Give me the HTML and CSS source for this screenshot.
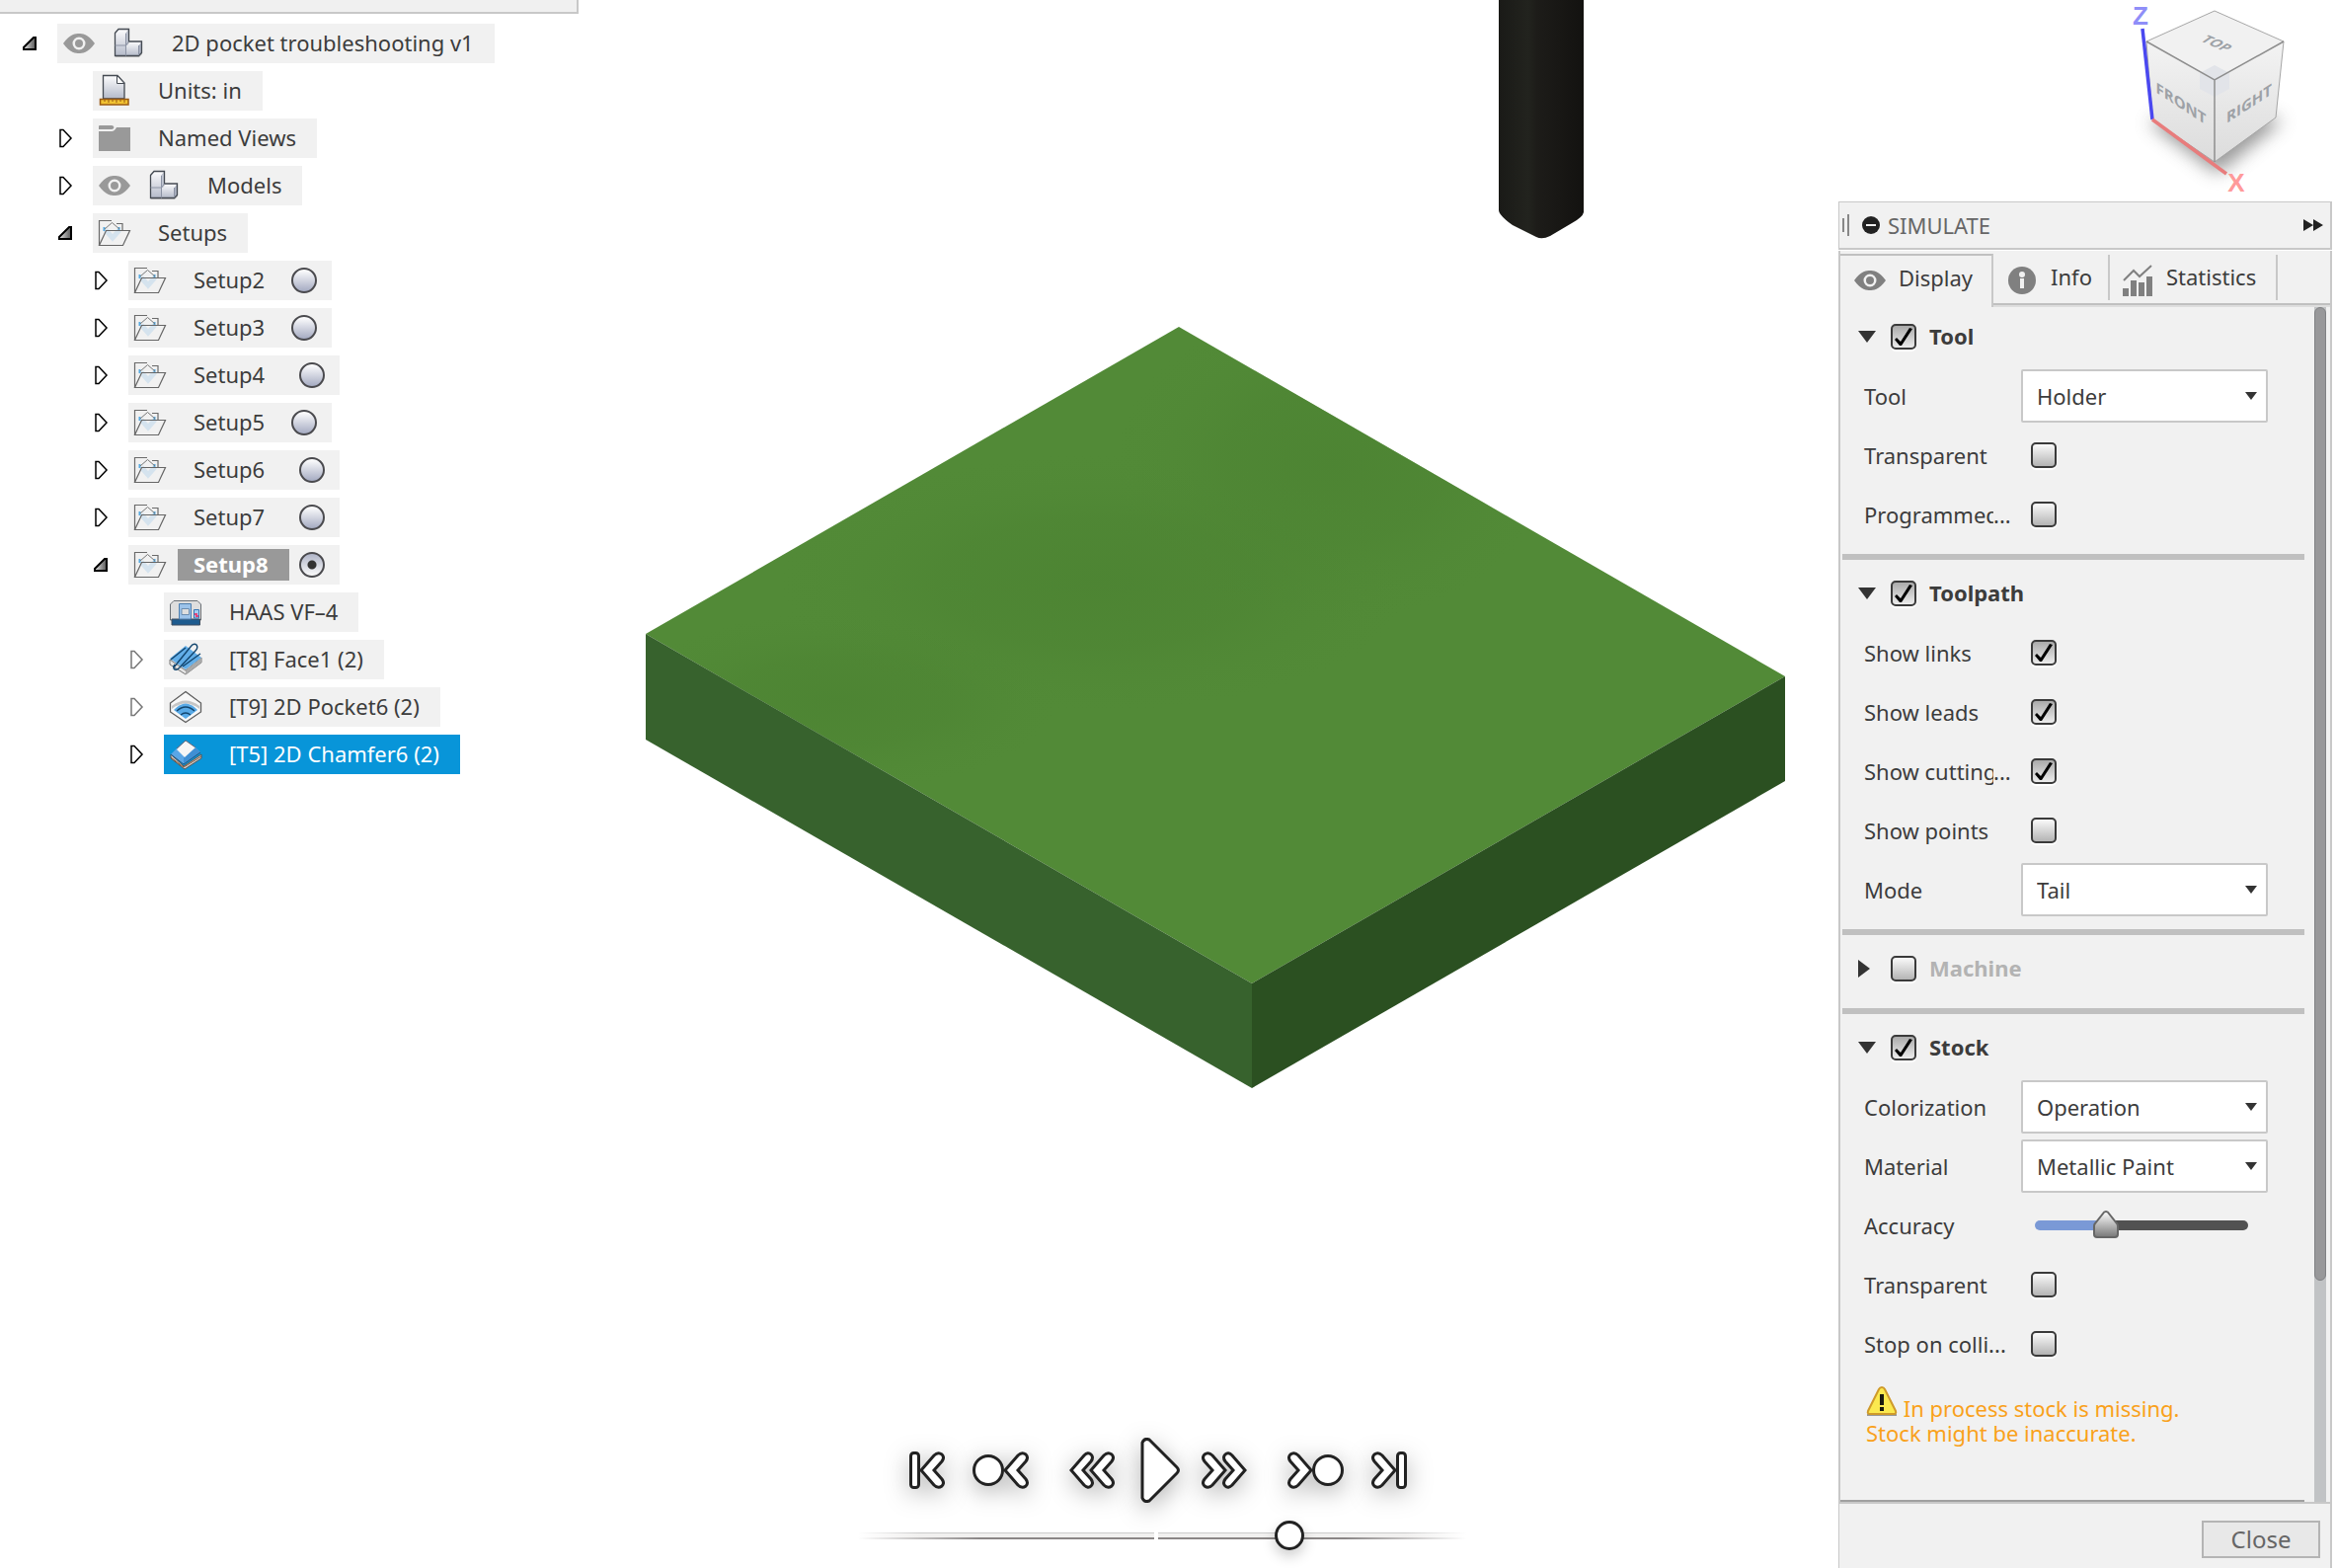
FILE: index.html
```html
<!DOCTYPE html>
<html lang="en">
<head>
<meta charset="utf-8">
<title>Simulate</title>
<link rel="stylesheet" href="styles.css">
</head>
<body>
<svg class="defs" aria-hidden="true">
  <defs>
    <linearGradient id="steel" x1="0" y1="0" x2="0" y2="1"><stop offset="0" stop-color="#fdfdfe"/><stop offset="1" stop-color="#b4bac9"/></linearGradient>
    <linearGradient id="open-fill" x1="0" y1="0" x2="1" y2="0"><stop offset="0" stop-color="#e8e8e8"/><stop offset="1" stop-color="#555"/></linearGradient>
  </defs>
  <symbol id="t-open" viewBox="0 0 36 40"><path d="M2 26V24L12 14H14V26Z" fill="url(#open-fill)" stroke="#000" stroke-width="2"/></symbol>
  <symbol id="t-closed" viewBox="0 0 36 40"><path d="M3 11.500H6L14 20L6 28.500H3Z" fill="#fff" stroke="currentColor" stroke-width="1.500"/></symbol>
  <symbol id="eye" viewBox="0 0 32 20"><path fill="currentColor" fill-rule="evenodd" d="M0 10C7 0 13 0 16 0S25 0 32 10C25 20 19 20 16 20S7 20 0 10ZM16 3.500A6.500 6.500 0 1 0 16 16.500A6.500 6.500 0 1 0 16 3.500ZM16 6A4 4 0 1 1 16 14A4 4 0 1 1 16 6Z"/></symbol>
  <symbol id="i-model" viewBox="0 0 50 40">
    <path d="M9 9L12 6H23V19L33 18L36 20V31L33 34H9Z" fill="#888" opacity=".4"/>
    <path d="M8 10L12 5.500H22.500L19 10V32.500H8Z" fill="url(#steel)"/><path d="M19 10L22.500 5.500V18L19 32.500Z" fill="#c3c8d4"/>
    <path d="M21 22L24 18H35.500L33 22V32.500H19V22Z" fill="url(#steel)"/><path d="M33 22L35.500 18V29L33 32.500Z" fill="#aab0c0"/>
    <path d="M8.500 9.500L12 5.500H22.500V18H35.500V29.500L32.500 32.500H8.500Z" fill="none" stroke="#444a52" stroke-width="1.300"/>
    <path d="M8.500 22H19.500V32.500M19.500 10V22L22.500 18M32.500 22V32" fill="none" stroke="#8c93a4"/>
  </symbol>
  <symbol id="i-units" viewBox="0 0 50 40">
    <path d="M10.500 4.500H25L32 12V28H10.500Z" fill="url(#steel)" stroke="#444a52" stroke-width="1.300"/><path d="M24.500 4.500V12.500H32Z" fill="#fff" stroke="#444a52"/>
    <path d="M7.500 28.500H36V34H7.500Z" fill="#f1c232" stroke="#9a5a12" stroke-width="1.500"/><path d="M12 29V31M16 29V32M20 29V31M24 29V32M28 29V31M32 29V32" stroke="#9a5a12"/>
  </symbol>
  <symbol id="i-folder" viewBox="0 0 50 40"><path d="M6 8Q6 7 7 7H19Q21 7 21.500 9Q21 11 19 11H6Z" fill="#999"/><path d="M6 13H19Q22 13 24 9H38V33H6Z" fill="#999"/></symbol>
  <symbol id="i-setup" viewBox="0 0 50 40">
    <path d="M6.500 32.500V7.500H19M24 10.500H30V17" fill="none" stroke="#6a6a6a" stroke-width="1.200"/>
    <path d="M13 17L20 25L27 17" fill="none" stroke="#d5e3ee" stroke-width="5"/><path d="M11.500 14V18M26.500 14V17" stroke="#58a9df" stroke-width="2"/>
    <path d="M12 16L19.500 9.500L27 16" fill="none" stroke="#777"/><path d="M13.500 17.500H37.500L30.500 32.500H6.500Z" fill="none" stroke="#666" stroke-width="1.200"/>
  </symbol>
  <symbol id="i-machine" viewBox="0 0 50 40">
    <path d="M6.500 28V12L10 8.500H34L37.500 12V28Z" fill="#dedede" stroke="#6b7076"/><path d="M8 27H36.500V33H8Z" fill="#1d5b8f" stroke="#3e4f60"/>
    <path d="M15.500 11.500H27.500V27H15.500Z" fill="#9cc3ea" stroke="#4f7fae"/><path d="M18 16.500H25.500V22.500H18Z" fill="#dedede" stroke="#6b8db0"/>
    <path d="M30.500 17.500H35.500V26H30.500Z" fill="#a4cdf2" stroke="#3877b4"/><path d="M31 21H34V23H35V25H32V23H31Z" fill="#e0457b"/>
  </symbol>
  <symbol id="i-face" viewBox="0 0 50 40">
    <path d="M6 20L22 31L38 18V23L22 35L6 25Z" fill="#e4e4e4" stroke="#777"/><path d="M22 31L38 18V23L22 35Z" fill="#a9a9a9"/>
    <path d="M6 19L22 6L38 18L22 30Z" fill="#62aee8"/>
    <path d="M10 28L27 7Q30 3 33 5Q35 8 32 11L16 28Q12 32 10 29Q9 27 11 25M7 20L22 8M19 27L37 14" fill="none" stroke="#12456e" stroke-width="1.400"/>
  </symbol>
  <symbol id="i-pocket" viewBox="0 0 50 40">
    <path d="M22 4.500L37.500 16V25L22 35.500L6.500 25V16Z" fill="#f8f8f8" stroke="#5d5d5d" stroke-width="1.300"/>
    <path d="M8 19Q22 8 36 19V22Q22 11 8 22Z" fill="#c6c6c6"/><path d="M10 23Q22 10 34 23L22 32Z" fill="#58a9e6"/>
    <path d="M13 24Q22 16 31 24M17 28Q22 24 27 28" fill="none" stroke="#12456e" stroke-width="1.300"/>
  </symbol>
  <symbol id="i-chamfer" viewBox="0 0 50 40">
    <path d="M7 20L20 32L38 20V24L21 35L7 24Z" fill="#cfcfcf" stroke="#555"/><path d="M7 23L20 33L38 22" fill="none" stroke="#8a5a3a"/>
    <path d="M7 20L14 13L22 6L32 13L37 18L20 30Z" fill="#5aa6e6"/><path d="M20 23L32 13L37 18L20 30Z" fill="#3f8fd4"/><path d="M13 15L22 6L32 13L21 23Z" fill="#f6f6f6"/>
    <path d="M13 14L22 6L32 13" fill="none" stroke="#667"/><path d="M7 20L20 30L37 18" fill="none" stroke="#24557f"/>
  </symbol>
  <symbol id="tri-down" viewBox="0 0 18 18"><path d="M0 3H18L9 15Z" fill="#333"/></symbol>
  <symbol id="tri-right" viewBox="0 0 18 18"><path d="M0 0V18L12 9Z" fill="#333"/></symbol>
</svg>

<main class="app">
  <svg class="scene" viewBox="0 0 2366 1588" preserveAspectRatio="xMidYMin slice" role="img" aria-label="Stock model">
    <defs>
      <linearGradient id="holder" x1="0" y1="0" x2="1" y2="0"><stop offset="0" stop-color="#1a1a17"/><stop offset=".35" stop-color="#22231e"/><stop offset=".45" stop-color="#1d1c19"/><stop offset="1" stop-color="#131210"/></linearGradient>
      <radialGradient id="shade"><stop offset="0" stop-color="#4c8332" stop-opacity=".8"/><stop offset=".5" stop-color="#4c8332" stop-opacity=".5"/><stop offset="1" stop-color="#508835" stop-opacity="0"/></radialGradient>
      <clipPath id="top-face"><path d="M1194 331L1808 685L1268 996L654 642Z"/></clipPath>
    </defs>
    <path d="M1518 0H1604V215Q1603 220 1592 226L1570 239Q1562 243 1556 240L1532 228Q1518 218 1518 213Z" fill="url(#holder)"/>
    <path d="M1194 331L1808 685L1268 996L654 642Z" fill="#528a37"/>
    <g clip-path="url(#top-face)"><ellipse cx="1350" cy="470" rx="220" ry="160" fill="url(#shade)"/><ellipse cx="1110" cy="590" rx="320" ry="130" fill="url(#shade)"/><ellipse cx="850" cy="710" rx="220" ry="90" fill="url(#shade)"/></g>
    <path d="M654 642L1268 996V1102L654 749Z" fill="#37622d"/>
    <path d="M1268 996L1808 685V791L1268 1102Z" fill="#2b5021"/>
  </svg>

  <nav class="browser" aria-label="Browser">
    <div class="browser-bar"></div>
    <ul class="tree">
      <li>
        <div class="row"><button class="toggle" aria-label="Collapse"><svg><use href="#t-open"/></svg></button><div class="item"><span class="slot eye"><svg><use href="#eye"/></svg></span><svg class="slot"><use href="#i-model"/></svg><span class="name">2D pocket troubleshooting v1</span></div></div>
        <ul>
          <li><div class="row leaf"><div class="item"><svg class="slot"><use href="#i-units"/></svg><span class="name">Units: in</span></div></div></li>
          <li><div class="row"><button class="toggle" aria-label="Expand"><svg><use href="#t-closed"/></svg></button><div class="item"><svg class="slot"><use href="#i-folder"/></svg><span class="name">Named Views</span></div></div></li>
          <li><div class="row"><button class="toggle" aria-label="Expand"><svg><use href="#t-closed"/></svg></button><div class="item"><span class="slot eye"><svg><use href="#eye"/></svg></span><svg class="slot"><use href="#i-model"/></svg><span class="name">Models</span></div></div></li>
          <li>
            <div class="row"><button class="toggle" aria-label="Collapse"><svg><use href="#t-open"/></svg></button><div class="item"><svg class="slot"><use href="#i-setup"/></svg><span class="name">Setups</span></div></div>
            <ul>
              <li><div class="row"><button class="toggle" aria-label="Expand"><svg><use href="#t-closed"/></svg></button><div class="item"><svg class="slot"><use href="#i-setup"/></svg><label class="name" for="s2">Setup2</label><input type="radio" name="setup" id="s2"></div></div></li>
              <li><div class="row"><button class="toggle" aria-label="Expand"><svg><use href="#t-closed"/></svg></button><div class="item"><svg class="slot"><use href="#i-setup"/></svg><label class="name" for="s3">Setup3</label><input type="radio" name="setup" id="s3"></div></div></li>
              <li><div class="row"><button class="toggle" aria-label="Expand"><svg><use href="#t-closed"/></svg></button><div class="item wide"><svg class="slot"><use href="#i-setup"/></svg><label class="name" for="s4">Setup4</label><input type="radio" name="setup" id="s4"></div></div></li>
              <li><div class="row"><button class="toggle" aria-label="Expand"><svg><use href="#t-closed"/></svg></button><div class="item"><svg class="slot"><use href="#i-setup"/></svg><label class="name" for="s5">Setup5</label><input type="radio" name="setup" id="s5"></div></div></li>
              <li><div class="row"><button class="toggle" aria-label="Expand"><svg><use href="#t-closed"/></svg></button><div class="item wide"><svg class="slot"><use href="#i-setup"/></svg><label class="name" for="s6">Setup6</label><input type="radio" name="setup" id="s6"></div></div></li>
              <li><div class="row"><button class="toggle" aria-label="Expand"><svg><use href="#t-closed"/></svg></button><div class="item wide"><svg class="slot"><use href="#i-setup"/></svg><label class="name" for="s7">Setup7</label><input type="radio" name="setup" id="s7"></div></div></li>
              <li>
                <div class="row"><button class="toggle" aria-label="Collapse"><svg><use href="#t-open"/></svg></button><div class="item wide"><svg class="slot"><use href="#i-setup"/></svg><label class="name active" for="s8">Setup8</label><input type="radio" name="setup" id="s8" checked></div></div>
                <ul>
                  <li><div class="row leaf"><div class="item"><svg class="slot"><use href="#i-machine"/></svg><span class="name">HAAS VF–4</span></div></div></li>
                  <li><div class="row"><button class="toggle dim" aria-label="Expand"><svg><use href="#t-closed"/></svg></button><div class="item"><svg class="slot"><use href="#i-face"/></svg><span class="name">[T8] Face1 (2)</span></div></div></li>
                  <li><div class="row"><button class="toggle dim" aria-label="Expand"><svg><use href="#t-closed"/></svg></button><div class="item"><svg class="slot"><use href="#i-pocket"/></svg><span class="name">[T9] 2D Pocket6 (2)</span></div></div></li>
                  <li><div class="row"><button class="toggle" aria-label="Expand"><svg><use href="#t-closed"/></svg></button><div class="item selected"><svg class="slot"><use href="#i-chamfer"/></svg><span class="name">[T5] 2D Chamfer6 (2)</span></div></div></li>
                </ul>
              </li>
            </ul>
          </li>
        </ul>
      </li>
    </ul>
  </nav>

  <section class="playback" aria-label="Playback">
    <div class="buttons">
      <div class="group">
        <button aria-label="Go to start"><svg width="36" height="40" viewBox="0 0 36 40"><rect x="1.500" y="2.500" width="8" height="35" rx="3"/><path d="M12 20L25 5Q29 1 33 4Q36 7 33 11L25 20L33 29Q36 33 33 36Q29 39 25 35Z"/></svg></button>
        <button aria-label="Previous operation"><svg width="58" height="40" viewBox="0 0 58 40"><circle cx="16" cy="20" r="14.500"/><path d="M33 20L46 5Q50 1 54 4Q57 7 54 11L46 20L54 29Q57 33 54 36Q50 39 46 35Z"/></svg></button>
      </div>
      <div class="group tight">
        <button aria-label="Rewind"><svg width="46" height="40" viewBox="0 0 46 40"><path d="M2 20L15 5Q19 1 22 4Q25 7 22 11L14 20L22 29Q25 33 22 36Q19 39 15 35Z"/><path d="M22 20L35 5Q39 1 43 4Q46 7 43 11L35 20L43 29Q46 33 43 36Q39 39 35 35Z"/></svg></button>
        <button class="play" aria-label="Play"><svg width="40" height="66" viewBox="0 0 40 66"><path d="M2 5Q4 0 9 2L37 30Q40 33 37 36L9 64Q4 66 2 61Z"/></svg></button>
        <button aria-label="Fast forward"><svg width="46" height="40" viewBox="0 0 46 40"><path d="M24 20L11 5Q7 1 3 4Q0 7 3 11L11 20L3 29Q0 33 3 36Q7 39 11 35Z"/><path d="M44 20L31 5Q27 1 24 4Q21 7 24 11L32 20L24 29Q21 33 24 36Q27 39 31 35Z"/></svg></button>
      </div>
      <div class="group">
        <button aria-label="Next operation"><svg width="58" height="40" viewBox="0 0 58 40"><circle cx="42" cy="20" r="14.500"/><path d="M25 20L12 5Q8 1 4 4Q1 7 4 11L12 20L4 29Q1 33 4 36Q8 39 12 35Z"/></svg></button>
        <button aria-label="Go to end"><svg width="36" height="40" viewBox="0 0 36 40"><rect x="26.500" y="2.500" width="8" height="35" rx="3"/><path d="M24 20L11 5Q7 1 3 4Q0 7 3 11L11 20L3 29Q0 33 3 36Q7 39 11 35Z"/></svg></button>
      </div>
    </div>
    <input class="speed" type="range" min="0" max="100" value="72" aria-label="Playback speed">
  </section>

  <aside class="side">
    <div class="cube">
      <svg width="200" height="204" viewBox="290 0 200 204" role="img" aria-label="View cube">
        <defs>
          <linearGradient id="cf" x1="0" y1="0" x2="0" y2="1"><stop offset="0" stop-color="#f3f3f3"/><stop offset="1" stop-color="#dcdcdc"/></linearGradient>
          <filter id="soft" x="-30%" y="-50%" width="160%" height="200%"><feGaussianBlur stdDeviation="9"/></filter>
        </defs>
        <path d="M326 124L393 104L462 122L396 176Z" fill="#777" opacity=".75" filter="url(#soft)"/>
        <path d="M393 11L463 42L393 81L324 42Z" fill="#f1f1f1"/><path d="M324 42L393 81V164L330 121Z" fill="url(#cf)"/><path d="M463 42L393 81V164L455 119Z" fill="url(#cf)"/>
        <path d="M393 66L408 74V90L393 98L378 90V74Z" fill="#e2e4e9"/>
        <path d="M393 11L463 42L455 119L393 164M393 11L324 42L330 121L393 164" fill="none" stroke="#a6a6a6"/>
        <path d="M324 42L393 81L463 42M393 81V164" fill="none" stroke="#8e8e8e" stroke-width="1.500"/>
        <path d="M320 29L330 121" stroke="#4a48f0" stroke-width="3.500"/><path d="M330 121L405 176" stroke="#e87c7c" stroke-width="3.500"/>
        <text class="axis z" x="318" y="25">Z</text><text class="axis x" x="415" y="194">X</text>
        <text class="face" transform="matrix(.86 .38 -.8 .55 391 47)">TOP</text>
        <text class="face" transform="translate(359 110) skewY(33)">FRONT</text>
        <text class="face" transform="translate(428 110) skewY(-33)">RIGHT</text>
      </svg>
    </div>

    <div class="panel">
      <header class="panel-head">
        <svg width="8" height="24" viewBox="0 0 8 24" aria-hidden="true"><path d="M1 5V19M6 1V23" stroke="#888" stroke-width="2"/></svg>
        <svg class="minus" width="18" height="18" viewBox="0 0 18 18" aria-hidden="true"><circle cx="9" cy="9" r="9" fill="#222"/><path d="M4 9H14" stroke="#f1f1f1" stroke-width="2"/></svg>
        <h2>SIMULATE</h2>
        <button class="ff" aria-label="Collapse panel"><svg width="20" height="12" viewBox="0 0 20 12"><path d="M0 0L10 6L0 12ZM10 0L20 6L10 12Z" fill="#222"/></svg></button>
      </header>
      <div class="panel-body">
        <div class="tabs" role="tablist">
          <button class="tab current" role="tab" aria-selected="true"><svg width="32" height="20"><use href="#eye"/></svg><span>Display</span></button>
          <button class="tab info" role="tab"><svg width="28" height="28" viewBox="0 0 28 28"><circle cx="14" cy="14" r="14" fill="#808080"/><circle cx="14" cy="8" r="3" fill="#f1f1f1"/><path d="M12 12H16V22H12Z" fill="#f1f1f1"/></svg><span>Info</span></button>
          <button class="tab stats" role="tab"><svg width="30" height="32" viewBox="0 0 30 32"><path d="M0 24H6V32H0ZM8 16H14V32H8ZM16 18H22V32H16ZM24 12H30V32H24Z" fill="#808080"/><path d="M1 16L11 6L17 12L29 1" fill="none" stroke="#808080" stroke-width="2"/></svg><span>Statistics</span></button>
        </div>
        <div class="scroll">
          <form class="settings">
            <section>
              <h3><svg width="18" height="18"><use href="#tri-down"/></svg><input type="checkbox" id="tool" checked><label for="tool">Tool</label></h3>
              <div class="field"><label for="tool-sel">Tool</label><span class="select"><select id="tool-sel"><option>Holder</option></select></span></div>
              <div class="field"><label for="tr">Transparent</label><input type="checkbox" id="tr"></div>
              <div class="field"><label for="pp"><span class="clip">Programmed</span>...</label><input type="checkbox" id="pp"></div>
            </section>
            <section>
              <h3><svg width="18" height="18"><use href="#tri-down"/></svg><input type="checkbox" id="tp" checked><label for="tp">Toolpath</label></h3>
              <div class="field"><label for="sl">Show links</label><input type="checkbox" id="sl" checked></div>
              <div class="field"><label for="sd">Show leads</label><input type="checkbox" id="sd" checked></div>
              <div class="field"><label for="sc"><span class="clip">Show cutting</span>...</label><input type="checkbox" id="sc" checked></div>
              <div class="field"><label for="sp">Show points</label><input type="checkbox" id="sp"></div>
              <div class="field"><label for="mode">Mode</label><span class="select"><select id="mode"><option>Tail</option></select></span></div>
            </section>
            <section>
              <h3 class="off"><svg width="18" height="18"><use href="#tri-right"/></svg><input type="checkbox" id="mc"><label for="mc">Machine</label></h3>
            </section>
            <section>
              <h3><svg width="18" height="18"><use href="#tri-down"/></svg><input type="checkbox" id="st" checked><label for="st">Stock</label></h3>
              <div class="field"><label for="col">Colorization</label><span class="select"><select id="col"><option>Operation</option></select></span></div>
              <div class="field"><label for="mat">Material</label><span class="select"><select id="mat"><option>Metallic Paint</option></select></span></div>
              <div class="field"><label for="acc">Accuracy</label><input class="accuracy" type="range" id="acc" min="0" max="100" value="31"></div>
              <div class="field"><label for="tr2">Transparent</label><input type="checkbox" id="tr2"></div>
              <div class="field"><label for="stop">Stop on colli...</label><input type="checkbox" id="stop"></div>
              <p class="warning"><svg width="32" height="32" viewBox="0 0 32 32" aria-hidden="true"><path d="M1 29H31V31H1Z" fill="#999"/><path d="M16 2Q18 2 19 4L30 26Q31 29 28 29H4Q1 29 2 26L13 4Q14 2 16 2Z" fill="#fbe94f" stroke="#cf9a2a" stroke-width="2"/><path d="M14 9H18V20H14ZM14 22H18V26H14Z" fill="#1a1a10"/></svg> In process stock is missing.<br>Stock might be inaccurate.</p>
            </section>
          </form>
          <div class="scrollbar"><div class="thumb"></div></div>
        </div>
      </div>
      <footer class="panel-foot"><button class="close">Close</button></footer>
    </div>
  </aside>
</main>
</body>
</html>
```
FILE: styles.css
```css
* { box-sizing: border-box; }

body {
  margin: 0;
  background: #fff;
  color: #3c3c3c;
  font: 22px/30px "Noto Sans", "Open Sans", sans-serif;
}

button, select, input { font: inherit; color: inherit; margin: 0; }
button { padding: 0; border: 0; background: none; }
svg { display: block; flex: none; }
ul { list-style: none; margin: 0; padding: 0; }
h2, h3, p { margin: 0; font-size: inherit; }
.defs { position: absolute; width: 0; height: 0; }

.app {
  position: relative;
  display: grid;
  grid-template-columns: 586px 1fr 504px;
  grid-template-rows: minmax(100vh, auto);
  overflow: hidden;
}

.scene { position: absolute; inset: 0; width: 100%; height: 100%; }

/* Browser tree */
.browser { grid-area: 1 / 1; position: relative; }
.browser-bar {
  height: 14px;
  margin-bottom: 10px;
  background: #f0f0f0;
  border: solid #c8c8c8;
  border-width: 0 2px 2px 0;
}
.tree { padding-left: 22px; }
.tree ul { padding-left: 36px; }
.row { display: flex; height: 40px; margin-bottom: 8px; }
.row.leaf { padding-left: 36px; }
.toggle { width: 36px; height: 40px; color: #000; }
.toggle svg { width: 36px; height: 40px; }
.toggle.dim { color: #777; }
.item { display: flex; align-items: center; background: #f1f1f1; }
.item.selected { background: #0895d9; color: #fff; }
.slot { width: 50px; height: 40px; }
.slot.eye { display: flex; align-items: center; padding-left: 6px; color: #999; }
.slot.eye svg { width: 32px; height: 20px; }
.name { padding: 0 21px 2px 16px; white-space: nowrap; }
.name.active { background: #999; color: #fff; font-weight: 700; }

input[type="radio"] {
  appearance: none;
  width: 26px;
  height: 26px;
  margin: 0 15px 0 6px;
  border: 2px solid #4a4a4e;
  border-radius: 50%;
  background: linear-gradient(#fff, #a5abc2);
}
.wide input[type="radio"] { margin-left: 14px; }
.wide .active + input[type="radio"] { margin-left: 10px; }
input[type="radio"]:checked {
  background: radial-gradient(circle, #333 0 4px, transparent 5px), linear-gradient(#b0b5c8, #fafafa);
}

/* Playback */
.playback {
  grid-area: 1 / 1 / 2 / -1;
  align-self: end;
  justify-self: center;
  position: relative;
  width: 628px;
  padding: 0 12px 18px 0;
}
.buttons {
  display: flex;
  justify-content: center;
  gap: 40px;
  padding-right: 8px;
  margin-bottom: 18px;
}
.group { display: flex; align-items: center; gap: 28px; }
.group.tight { gap: 22px; }
.play { padding-left: 4px; }
.group svg {
  fill: #fff;
  stroke: #222;
  stroke-width: 3px;
  filter: drop-shadow(0 6px 12px rgba(0, 0, 0, .3));
}
.speed {
  appearance: none;
  display: block;
  width: 100%;
  height: 30px;
  background:
    linear-gradient(#fff, #fff) 49% 50% / 4px 14px no-repeat,
    linear-gradient(90deg, transparent, #8a8686 20%, #8a8686 80%, transparent) 0 17px / 100% 2px no-repeat,
    linear-gradient(90deg, transparent, #f1f0ef 10%, #f1f0ef 90%, transparent) 0 13px / 100% 4px no-repeat,
    linear-gradient(90deg, transparent, #ccc 10%, #ccc 90%, transparent) 0 12px / 100% 1px no-repeat;
}
.speed::-webkit-slider-thumb {
  appearance: none;
  width: 30px;
  height: 30px;
  border: 3px solid #222;
  border-radius: 50%;
  background: #fff;
  box-shadow: 0 6px 14px rgba(0, 0, 0, .2);
}

/* Right side */
.side { grid-area: 1 / 3; position: relative; display: flex; flex-direction: column; padding-right: 4px; }
.cube { display: flex; justify-content: flex-end; padding-right: 22px; }
.cube text { text-anchor: middle; }
.axis { font: 700 26px "Liberation Sans", sans-serif; }
.axis.z { fill: #8f8ef8; }
.axis.x { fill: #ff9a9a; }
.face { font: 700 15px "Open Sans", "Noto Sans", sans-serif; fill: #9da1a6; }

.panel { flex: 1; display: flex; flex-direction: column; }
.panel-head {
  display: flex;
  align-items: center;
  height: 49px;
  padding: 0 7px 0 3px;
  background: #f1f1f1;
  border: solid #c8c8c8;
  border-width: 1px 2px 2px 1px;
}
.panel-head h2 { flex: 1; padding-bottom: 1px; font-weight: 400; color: #666; }
.minus { margin: 0 8px 0 12px; }

.panel-body {
  flex: 1;
  display: flex;
  flex-direction: column;
  margin-top: 1px;
  background: #f1f1f1;
  border: solid #c8c8c8;
  border-width: 0 2px 2px;
}
.tabs { display: flex; height: 57px; padding-top: 3px; background: linear-gradient(#c0c0c0, #c0c0c0) 0 53px / 100% 2px no-repeat, linear-gradient(#ddd, #ddd) 0 55px / 100% 2px no-repeat; }
.tab { display: flex; align-items: center; height: 46px; margin-top: 1px; border-right: 2px solid #c8c8c8; }
.tab svg { color: #808080; }
.tab.current { height: 54px; margin-top: 0; padding: 0 19px 3px 14px; gap: 13px; background: #f1f1f1; border-top: 2px solid #c0c0c0; }
.tab.info { padding: 6px 16px 0 15px; gap: 15px; }
.tab.stats { padding: 6px 20px 0 13px; gap: 14px; }
.tab span { padding-bottom: 8px; }
.tab.current span { padding-bottom: 6px; }

.scroll { flex: 1; display: flex; justify-content: space-between; }
.settings { width: 470px; padding-left: 2px; border-bottom: 2px solid #a0a0a0; }
.settings section + section { margin-top: 10px; padding-top: 4px; border-top: 6px solid #c0c0c0; }
.settings h3 { display: flex; align-items: center; height: 60px; padding-left: 16px; }
.settings h3 svg { margin-right: 15px; }
.settings h3 label { padding: 0 0 2px 13px; }
.settings h3.off { color: #b3b3b3; }
.field { display: flex; align-items: center; height: 60px; padding-left: 22px; }
.field > label { display: flex; width: 159px; white-space: nowrap; }
.clip { width: 131px; overflow: hidden; }

input[type="checkbox"] {
  appearance: none;
  width: 26px;
  height: 26px;
  border: 2px solid #3a3a3a;
  border-radius: 5px;
  background: linear-gradient(#fafafa, #b4b4b4);
  box-shadow: 0 2px 1px #fff;
}
.field input[type="checkbox"] { margin-left: 10px; }
input[type="checkbox"]:checked { background: linear-gradient(#aaa, #ececec); }
input[type="checkbox"]:checked::before {
  content: "";
  display: block;
  width: 22px;
  height: 22px;
  background: #000;
  clip-path: polygon(2px 14px, 4px 12px, 8px 16px, 17px 2px, 20px 3px, 9px 20px, 7px 20px);
}

.select { position: relative; width: 250px; }
.select::after {
  content: "";
  position: absolute;
  right: 11px;
  top: 23px;
  width: 12px;
  height: 8px;
  background: #333;
  clip-path: polygon(0 0, 100% 0, 50% 100%);
  pointer-events: none;
}
select {
  appearance: none;
  display: block;
  width: 100%;
  height: 54px;
  padding: 0 14px;
  border: 2px solid #c8c8c8;
  border-radius: 2px;
  background: #fff;
}

.accuracy {
  appearance: none;
  width: 216px;
  height: 28px;
  margin-left: 14px;
  background: none;
}
.accuracy::-webkit-slider-runnable-track {
  height: 10px;
  border-radius: 5px;
  background: linear-gradient(90deg, #7a99d6 34%, #525252 34%);
}
.accuracy::-webkit-slider-thumb {
  appearance: none;
  width: 28px;
  height: 28px;
  margin-top: -10px;
  background: url("data:image/svg+xml,%3Csvg xmlns='http://www.w3.org/2000/svg' width='28' height='28'%3E%3Cdefs%3E%3ClinearGradient id='g' x2='0' y2='1'%3E%3Cstop stop-color='%23fff'/%3E%3Cstop offset='1' stop-color='%23777'/%3E%3C/linearGradient%3E%3C/defs%3E%3Cpath d='M14 1Q16 1 17 3L25 13Q26 14 26 16V24Q26 27 23 27H5Q2 27 2 24V16Q2 14 3 13L11 3Q12 1 14 1Z' fill='url(%23g)' stroke='%23666' stroke-width='2'/%3E%3C/svg%3E") no-repeat;
}

.warning { padding: 12px 0 50px 24px; color: #f9a11b; line-height: 25px; }
.warning svg { display: inline-block; vertical-align: 0; }

.scrollbar { width: 12px; margin-right: 4px; background: #c1c3c5; }
.thumb { height: 81%; height: calc(82% - 6px); border: 1px solid #808184; border-radius: 6px; background: #98989a; }

.panel-foot {
  display: flex;
  justify-content: flex-end;
  height: 65px;
  padding: 17px 10px 10px;
  background: #f1f1f1;
  border: solid #c8c8c8;
  border-width: 0 2px 0 1px;
}
.close { width: 120px; border: 2px solid #b4b4b4; background: #e8e8e8; color: #666; font-size: 24px; }
```
